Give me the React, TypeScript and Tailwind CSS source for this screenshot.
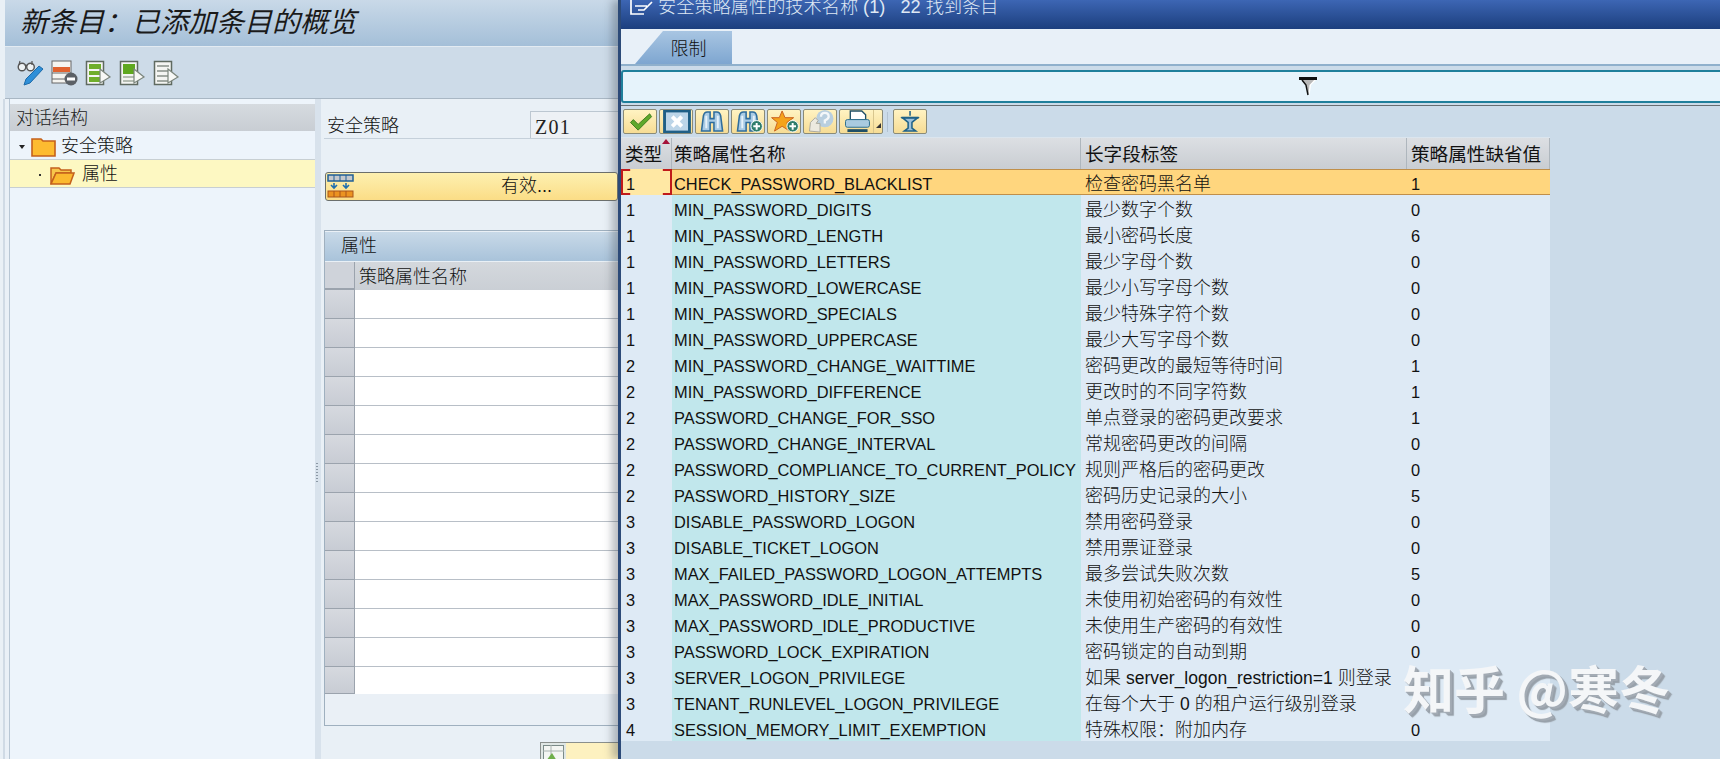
import { ReactNode } from "react";

const rows = [
  ["1", "CHECK_PASSWORD_BLACKLIST", "检查密码黑名单", "1"],
  ["1", "MIN_PASSWORD_DIGITS", "最少数字个数", "0"],
  ["1", "MIN_PASSWORD_LENGTH", "最小密码长度", "6"],
  ["1", "MIN_PASSWORD_LETTERS", "最少字母个数", "0"],
  ["1", "MIN_PASSWORD_LOWERCASE", "最少小写字母个数", "0"],
  ["1", "MIN_PASSWORD_SPECIALS", "最少特殊字符个数", "0"],
  ["1", "MIN_PASSWORD_UPPERCASE", "最少大写字母个数", "0"],
  ["2", "MIN_PASSWORD_CHANGE_WAITTIME", "密码更改的最短等待时间", "1"],
  ["2", "MIN_PASSWORD_DIFFERENCE", "更改时的不同字符数", "1"],
  ["2", "PASSWORD_CHANGE_FOR_SSO", "单点登录的密码更改要求", "1"],
  ["2", "PASSWORD_CHANGE_INTERVAL", "常规密码更改的间隔", "0"],
  ["2", "PASSWORD_COMPLIANCE_TO_CURRENT_POLICY", "规则严格后的密码更改", "0"],
  ["2", "PASSWORD_HISTORY_SIZE", "密码历史记录的大小", "5"],
  ["3", "DISABLE_PASSWORD_LOGON", "禁用密码登录", "0"],
  ["3", "DISABLE_TICKET_LOGON", "禁用票证登录", "0"],
  ["3", "MAX_FAILED_PASSWORD_LOGON_ATTEMPTS", "最多尝试失败次数", "5"],
  ["3", "MAX_PASSWORD_IDLE_INITIAL", "未使用初始密码的有效性", "0"],
  ["3", "MAX_PASSWORD_IDLE_PRODUCTIVE", "未使用生产密码的有效性", "0"],
  ["3", "PASSWORD_LOCK_EXPIRATION", "密码锁定的自动到期", "0"],
  ["3", "SERVER_LOGON_PRIVILEGE", "如果 server_logon_restriction=1 则登录", "0"],
  ["3", "TENANT_RUNLEVEL_LOGON_PRIVILEGE", "在每个大于 0 的租户运行级别登录", "0"],
  ["4", "SESSION_MEMORY_LIMIT_EXEMPTION", "特殊权限：附加内存", "0"],
];

const DocIcon = ({ kind }: { kind: "rows" | "top" | "plain" }) => (
  <svg width="27" height="26" viewBox="0 0 27 26">
    <rect x="1.5" y="1.5" width="17" height="23" fill="#f4f5f2" stroke="#5f6a60" strokeWidth="1.5" />
    {kind === "rows" && (
      <>
        <rect x="4" y="4" width="12" height="5" fill="#6fae2a" />
        <rect x="4" y="11" width="12" height="4" fill="#6fae2a" />
        <rect x="4" y="17" width="12" height="5" fill="#6fae2a" />
      </>
    )}
    {kind === "top" && (
      <>
        <rect x="4" y="4" width="12" height="10" fill="#5fa81f" />
        <rect x="4" y="16" width="12" height="2" fill="#b5bcb2" />
        <rect x="4" y="20" width="12" height="2" fill="#b5bcb2" />
      </>
    )}
    {kind === "plain" && (
      <>
        <rect x="4" y="5" width="12" height="2" fill="#a3a9a3" />
        <rect x="4" y="10" width="12" height="2" fill="#a3a9a3" />
        <rect x="4" y="15" width="12" height="2" fill="#a3a9a3" />
        <rect x="4" y="20" width="12" height="2" fill="#a3a9a3" />
      </>
    )}
    <path d="M15 9 L25 17 L15 23 Z" fill="#f7f8f6" stroke="#7b857c" strokeWidth="1.2" />
  </svg>
);

const GlassesPen = () => (
  <svg width="27" height="27" viewBox="0 0 27 27">
    <circle cx="5" cy="8" r="3.8" fill="#eef2f4" stroke="#555" strokeWidth="1.4" />
    <circle cx="13.5" cy="8" r="3.8" fill="#eef2f4" stroke="#555" strokeWidth="1.4" />
    <path d="M8 7 Q9 5 10 7 M2 6 L3 2 M15 6 L15 2" fill="none" stroke="#555" strokeWidth="1.2" />
    <path d="M22 7 L26 10 L13 24 L7 26 L9 20 Z" fill="#2f8fd8" stroke="#1e6aa8" strokeWidth="1" />
  </svg>
);

const TableMinus = () => (
  <svg width="27" height="27" viewBox="0 0 27 27">
    <rect x="1" y="2" width="19" height="22" fill="#f5f4f0" stroke="#666" strokeWidth="1" />
    <rect x="2" y="8" width="17" height="5" fill="#e0622f" />
    <path d="M1 14 H20 M1 20 H14" stroke="#666" strokeWidth="1.2" />
    <circle cx="20" cy="20" r="6.5" fill="#5b6066" />
    <rect x="16" y="18.5" width="8" height="3" fill="#fff" />
  </svg>
);

const Folder = ({ open }: { open?: boolean }) =>
  open ? (
    <svg width="25" height="20" viewBox="0 0 25 20">
      <path d="M1 19 V3 H9 L11 5 H21 V8 H6 L1 19 Z" fill="#f7c64b" stroke="#c4601c" strokeWidth="1.5" />
      <path d="M1 19 L6 8 H24 L20 19 Z" fill="#fbb92f" stroke="#c4601c" strokeWidth="1.5" />
    </svg>
  ) : (
    <svg width="25" height="20" viewBox="0 0 25 20">
      <path d="M1 19 V2 H10 L12 4 H24 V19 Z" fill="#fdbb30" stroke="#c4601c" strokeWidth="1.6" />
    </svg>
  );

const ColumnsIcon = () => (
  <svg width="27" height="24" viewBox="0 0 27 24">
    <rect x="1" y="1" width="25" height="6" fill="#c4c8cc" stroke="#1f5f96" strokeWidth="1.5" />
    <path d="M7 1 V7 M13 1 V7 M19 1 V7" stroke="#1f5f96" />
    <path d="M7 9 V13 M4 11 L7 14 L10 11 M19 9 V13 M16 11 L19 14 L22 11" fill="none" stroke="#1f6fae" strokeWidth="1.6" />
    <rect x="1" y="17" width="25" height="6" fill="#ec9320" stroke="#a9541a" />
    <path d="M7 17 V23 M13 17 V23 M19 17 V23" stroke="#a9541a" />
  </svg>
);

const Binoculars = () => (
  <>
    <path d="M5 6 Q6 2 9 2 H12 V9 H16 V2 H19 Q22 2 23 6 L25 22 H16 V13 H12 V22 H3 Z" fill="#a9cbe4" stroke="#2f6d9c" strokeWidth="1.6" />
    <path d="M8 6 V19 M20 6 V19" stroke="#e6f2fa" strokeWidth="2" />
  </>
);

const PlusBadge = () => (
  <>
    <circle cx="23" cy="17" r="6" fill="#2f7d6b" stroke="#fff" />
    <path d="M19.5 17 H26.5 M23 13.5 V20.5" stroke="#fff" strokeWidth="2" />
  </>
);

const icons: Record<string, ReactNode> = {
  ok: <path d="M4 13 L7 10 L12 15 L24 4 L26 7 L12 21 Z" fill="#5fa82b" stroke="#3f7d20" strokeWidth="1" />,
  cancel: (
    <>
      <rect x="2" y="1" width="26" height="22" fill="#bcd5e8" stroke="#1f5f86" strokeWidth="3" />
      <path d="M10 7 L20 17 M20 7 L10 17" stroke="#fff" strokeWidth="4" />
    </>
  ),
  find: <Binoculars />,
  findMore: (
    <>
      <Binoculars />
      <PlusBadge />
    </>
  ),
  star: (
    <>
      <path d="M12 1 L15 8 L24 8 L17 13 L20 22 L12 17 L4 22 L7 13 L1 8 L9 8 Z" fill="#f5a31a" stroke="#c9601c" />
      <PlusBadge />
    </>
  ),
  help: (
    <>
      <circle cx="19" cy="9" r="9" fill="#b9cfdf" />
      <path d="M15 7 Q15 3 19 3 Q23 3 23 7 Q23 9 19 11 V14" fill="none" stroke="#f4f7f9" strokeWidth="2.4" />
      <path d="M3 22 L4 13 L9 8 L12 11 L10 14 L14 14 L14 23 Z" fill="#ece9df" stroke="#a7a79f" />
    </>
  ),
  print: (
    <>
      <path d="M8 1 H20 L24 5 V10 H8 Z" fill="#fff" stroke="#1f4f66" strokeWidth="1.4" />
      <rect x="3" y="10" width="25" height="8" rx="2" fill="#a9cbe0" stroke="#2a6d8c" />
      <rect x="5" y="20" width="21" height="3" fill="#1f4f66" />
    </>
  ),
  filter: (
    <>
      <path d="M14 1 V6 M6 8 H22 L16 13 V19 L20 22 H8 L12 19 V13 Z" fill="#9cc0da" stroke="#1f6288" strokeWidth="1.6" />
      <path d="M5 8 H23" stroke="#1f6288" strokeWidth="2" />
    </>
  ),
};

const ToolButton = ({ name, wide }: { name: string; wide?: boolean }) => (
  <div
    className={`flex h-[25px] items-center rounded-[2px] border border-[#8a8b78] bg-gradient-to-b from-[#fff3c2] to-[#f6dc94] pl-[2px] ${
      wide ? "w-[44px]" : "w-[34px]"
    }`}
  >
    <svg width="30" height="23" viewBox="0 0 30 24">
      {icons[name]}
    </svg>
    {wide && (
      <div className="ml-[1px] flex h-full flex-1 items-end justify-center border-l border-[#d8c68e] pb-[5px]">
        <div className="border-b-[5px] border-l-[5px] border-b-[#333] border-l-transparent" />
      </div>
    )}
  </div>
);

// latin runs in the label column use their own size
const Label = ({ text }: { text: string }) => (
  <>
    {text.split(/([\x21-\x7e]+)/).map((part, i) =>
      /[\x21-\x7e]/.test(part) ? (
        <span key={i} className="text-[17.5px] font-normal">
          {part}
        </span>
      ) : (
        <span key={i} className="font-light">
          {part}
        </span>
      )
    )}
  </>
);

function App() {
  return (
    <div className="relative flex h-[759px] w-[1720px] overflow-hidden bg-[#e9f0f6] font-['Liberation_Sans','Noto_Sans_CJK_SC',sans-serif] text-[#111]">
      {/* main window behind the popup */}
      <div className="flex w-[618px] shrink-0 flex-col">
        <div className="ml-[5px] flex h-[46px] shrink-0 items-center bg-gradient-to-b from-[#c9d9e8] to-[#a4bfd8] pl-[15px] font-['Liberation_Serif','Noto_Sans_CJK_SC',serif] text-[28px] italic text-[#1a1a1a]">
          新条目：已添加条目的概览
        </div>
        <div className="ml-[5px] flex h-[53px] shrink-0 items-center gap-[7px] border-t border-b border-t-[#e3ebf2] border-b-[#a9b7c4] bg-[#cddbe8] pl-[12px]">
          <GlassesPen />
          <TableMinus />
          <DocIcon kind="rows" />
          <DocIcon kind="top" />
          <DocIcon kind="plain" />
        </div>
        <div className="flex min-h-0 flex-1">
          <div className="ml-[3px] w-[7px] shrink-0 border-l-2 border-r border-l-[#cfdae5] border-r-[#b7c6d4] bg-[#e9f0f7]" />
          <div className="flex w-[305px] shrink-0 flex-col bg-[#edf4fb] pt-[5px] text-[18px]">
            <div className="flex h-[27px] shrink-0 items-center bg-gradient-to-b from-[#d6dbe0] to-[#c8cdd3] pl-[6px] pt-[2px] font-light text-[#222]">对话结构</div>
            <div className="flex h-[28px] shrink-0 items-center pl-[9px] pt-[3px]">
              <div className="mr-[6px] border-x-[3.5px] border-t-[4px] border-x-transparent border-t-[#222]" />
              <Folder />
              <span className="ml-[5px] font-light">安全策略</span>
            </div>
            <div className="flex h-[29px] shrink-0 items-center border-y border-[#c8cfd2] bg-[#fdf8c2] pl-[29px] pt-[2px]">
              <div className="mr-[9px] h-[2px] w-[2px] bg-[#333]" />
              <Folder open />
              <span className="ml-[7px] font-light">属性</span>
            </div>
          </div>
          <div className="relative w-[6px] shrink-0 bg-[#d8e2ec]">
            <div className="absolute left-[1px] top-[364px] h-[19px] w-[2px] bg-[repeating-linear-gradient(to_bottom,#8b98a5_0,#8b98a5_1px,transparent_1px,transparent_3px)]" />
          </div>
          <div className="flex min-w-0 flex-1 flex-col pl-[3px] text-[18px]">
            <div className="mt-[12px] flex h-[28px] shrink-0 items-center border-b border-[#c5d0da]">
              <span className="ml-[3px] w-[203px] pt-[4px] font-light">安全策略</span>
              <div className="flex h-full flex-1 items-center border-l border-t border-[#bcc7d1] bg-[#edf1f5] pl-[4px] pt-[3px] font-['Liberation_Serif',serif] text-[20px] tracking-[1.3px] text-[#222]">
                Z01
              </div>
            </div>
            <div className="relative ml-[1px] mt-[33px] flex h-[29px] shrink-0 items-center justify-center rounded-[3px] border border-[#6b6f6c] bg-gradient-to-b from-[#fdf0b0] to-[#fbdd86] pl-[110px] font-light">
              <span className="absolute left-[1px] top-[1px]">
                <ColumnsIcon />
              </span>
              有效...
            </div>
            <div className="mt-[29px] flex h-[496px] shrink-0 flex-col border-b border-l border-t border-[#9fb0bf] bg-[#eaf0f6] pt-[1px]">
              <div className="flex h-[29px] shrink-0 items-center bg-gradient-to-b from-[#c8d9e8] to-[#a9c3da] pl-[16px] font-light">属性</div>
              <div className="flex h-[29px] shrink-0 border-t border-[#e9f0f6]">
                <div className="w-[30px] shrink-0 border-b-2 border-r border-[#9ba3ad] bg-[#cfd3da]" />
                <div className="flex flex-1 items-center bg-gradient-to-b from-[#d4d8dd] to-[#cacfd5] pl-[4px] pt-[3px] font-light">策略属性名称</div>
              </div>
              {Array.from({ length: 14 }).map((_, i) => (
                <div key={i} className={`flex shrink-0 ${i === 13 ? "h-[27px]" : "h-[29px]"}`}>
                  <div className="w-[30px] shrink-0 border-b border-r border-[#9ba3ad] bg-gradient-to-b from-[#d6d9df] to-[#c8ccd4]" />
                  <div className={`flex-1 bg-white ${i === 13 ? "" : "border-b border-[#b8bfc7]"}`} />
                </div>
              ))}
            </div>
            <div className="ml-[216px] mt-[16px] flex h-[20px] flex-1 border-l border-t border-[#8a8f8c] bg-[#fdf1c0]">
              <div className="h-full w-[25px] bg-[#dfe6e4] p-[2px]">
                <svg width="21" height="16" viewBox="0 0 21 16">
                  <rect x="0.5" y="0.5" width="20" height="15" fill="#f3f5f2" stroke="#7a8a88" />
                  <path d="M0 6 H21 M8 0 V16" stroke="#a9b2b0" />
                  <path d="M3 16 L9 8 L14 16 Z" fill="#6fae4a" />
                </svg>
              </div>
            </div>
          </div>
        </div>
      </div>

      {/* value help popup */}
      <div className="flex min-w-0 flex-1 flex-col border-l-[3px] border-[#2c4a78] bg-[#cbdbe9] shadow-[-6px_0_8px_rgba(60,70,80,0.35)]">
        <div className="flex h-[29px] shrink-0 items-start bg-gradient-to-b from-[#3d66b4] to-[#1c3f7e] pl-[9px] text-[18.2px] text-[#dfe8f4]">
          <svg width="24" height="16" viewBox="0 0 24 16" className="shrink-0">
            <path d="M1 0 V14 H14 M17 6 H5 M8 10 H14 L22 2" fill="none" stroke="#fff" strokeWidth="1.7" />
          </svg>
          <span className="-mt-[4px] ml-[4px] whitespace-pre font-light leading-[22px]">安全策略属性的技术名称 (1)   22 找到条目</span>
        </div>
        <div className="flex h-[37px] shrink-0 items-end border-b-2 border-[#8fb0cc] bg-[#e8f0f8] pl-[14px]">
          <div className="relative flex h-[33px] w-[97px] items-center justify-center bg-gradient-to-b from-[#a8c5e2] to-[#7ea6d0] pl-[10px] pt-[4px] text-[18px] font-light [clip-path:polygon(28px_0,100%_0,100%_100%,0_100%)]">
            限制
          </div>
        </div>
        <div className="-mr-[4px] mt-[4px] flex h-[33px] shrink-0 items-center justify-center rounded-[3px] border-2 border-[#1f7f9b] bg-[#e6f3fb] pl-[272px]">
          <svg width="20" height="20" viewBox="0 0 20 20">
            <path d="M3 1 H19 L12 8 L10.5 19 L9 8 Z" fill="#fff" />
            <path d="M1 1 H17 L10.5 8 L9.5 18 L7.5 8 Z" fill="#b9b9b9" />
            <path d="M0 1.5 H18" stroke="#111" strokeWidth="3" />
            <path d="M3 3 L7 8 L9 18" fill="none" stroke="#111" strokeWidth="1.5" />
          </svg>
        </div>
        <div className="mt-[2px] flex h-[32px] shrink-0 items-center gap-[2px] border-t border-[#666d72] pl-[2px]">
          <ToolButton name="ok" />
          <ToolButton name="cancel" />
          <ToolButton name="find" />
          <ToolButton name="findMore" />
          <ToolButton name="star" />
          <ToolButton name="help" />
          <ToolButton name="print" wide />
          <div className="ml-[2px] mr-[3px] h-[20px] w-[1px] bg-[#b3c3d2]" />
          <ToolButton name="filter" />
        </div>
        <div className="grid h-[32px] w-[929px] shrink-0 grid-cols-[51px_409px_326px_143px] border-t border-[#dbe5ee] text-[18.6px] text-[#111]">
          {["类型", "策略属性名称", "长字段标签", "策略属性缺省值"].map((h, i) => (
            <div key={h} className={`relative flex items-center overflow-hidden border-r border-[#aeb6bd] bg-gradient-to-b from-[#dcdfe3] to-[#c9cdd2] pt-[3px] whitespace-nowrap ${i === 1 ? "pl-[2px]" : "pl-[4px]"}`}>
              {h}
              {i === 0 && <div className="absolute right-[1px] top-[1px] border-x-[4px] border-b-[5px] border-x-transparent border-b-[#a5123a]" />}
            </div>
          ))}
        </div>
        <div className="w-[929px]">
          {rows.map((r, i) => (
            <div key={r[1]} className="grid h-[26px] grid-cols-[51px_409px_326px_143px] grid-rows-[26px] whitespace-nowrap text-[16.4px]">
              <div className={`relative pl-[5px] leading-[30px] ${i === 0 ? "bg-[#ffe8a4]" : "bg-[#deeaf5]"}`}>
                {r[0]}
                {i === 0 && (
                  <div className="absolute inset-0 border-2 border-[#c01a1a] [clip-path:polygon(0_0,18%_0,18%_2px,82%_2px,82%_0,100%_0,100%_100%,82%_100%,82%_calc(100%-2px),18%_calc(100%-2px),18%_100%,0_100%)]" />
                )}
              </div>
              <div className={`overflow-hidden pl-[2px] ${i === 0 ? "border-y border-[#c08f4a] bg-[#ffd67e] leading-[28px]" : "bg-[#c1e7ec] leading-[30px]"}`}>{r[1]}</div>
              <div className={`overflow-hidden pl-[4px] text-[18px] ${i === 0 ? "border-y border-[#c08f4a] bg-[#ffd67e] leading-[28px]" : "bg-[#deeaf5] leading-[30px]"}`}>
                <Label text={r[2]} />
              </div>
              <div className={`pl-[4px] ${i === 0 ? "border-y border-[#c08f4a] bg-[#ffd67e] leading-[28px]" : "bg-[#deeaf5] leading-[30px]"}`}>{r[3]}</div>
            </div>
          ))}
        </div>
      </div>

      {/* watermark */}
      <div className="absolute left-[1403px] top-[655px] whitespace-nowrap font-['Noto_Sans_CJK_SC',sans-serif] text-[51px] font-bold leading-[64px] text-[#f4f6f8] [text-shadow:1px_1px_0_#a3abb4,2px_2px_0_#a3abb4,3px_3px_0_#98a1aa,4px_4px_1px_#98a1aa]">
        知乎 @寒冬
      </div>
    </div>
  );
}

export default App;
